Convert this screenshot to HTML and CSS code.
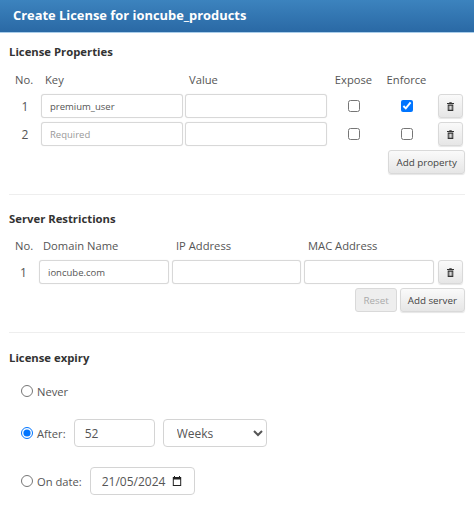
FILE: index.html
```html
<!DOCTYPE html>
<html lang="en">
<head>
    <meta charset="UTF-8">
    <meta name="viewport" content="width=device-width, initial-scale=1.0">
    <title>Create License</title>
    <link rel="stylesheet" href="styles.css">
</head>
<body>

    <svg class="icon-defs" width="0" height="0">
        <symbol id="trash" viewBox="0 0 8 10">
            <path d="M2.6 0h2.8v1H8v1.2H0V1h2.6z" fill="#333"/>
            <path d="M.8 2.8h6.4V10H.8z M2 4v4.8h1V4z M3.5 4v4.8h1V4z M5 4v4.8h1V4z" fill="#333" fill-rule="evenodd"/>
        </symbol>
    </svg>

    <div class="header">Create License for ioncube_products</div>

    <form class="content">
        <h4 class="first-title">License Properties</h4>
        <div class="prop-grid">
            <span class="col-label">No.</span>
            <span class="col-label pad">Key</span>
            <span class="col-label pad">Value</span>
            <span class="col-label center">Expose</span>
            <span class="col-label center">Enforce</span>
            <span></span>

            <span class="row-no">1</span>
            <input type="text" class="field" value="premium_user">
            <input type="text" class="field">
            <input type="checkbox" class="check">
            <input type="checkbox" class="check" checked>
            <button type="button" class="button icon-button"><svg class="trash"><use href="#trash"/></svg></button>

            <span class="row-no">2</span>
            <input type="text" class="field" placeholder="Required">
            <input type="text" class="field">
            <input type="checkbox" class="check">
            <input type="checkbox" class="check">
            <button type="button" class="button icon-button"><svg class="trash"><use href="#trash"/></svg></button>
        </div>
        <div class="actions">
            <button type="button" class="button">Add property</button>
        </div>

        <hr>

        <h4 class="server-title">Server Restrictions</h4>
        <div class="server-grid">
            <span class="col-label">No.</span>
            <span class="col-label pad">Domain Name</span>
            <span class="col-label pad">IP Address</span>
            <span class="col-label pad">MAC Address</span>
            <span></span>

            <span class="row-no">1</span>
            <input type="text" class="field" value="ioncube.com">
            <input type="text" class="field">
            <input type="text" class="field">
            <button type="button" class="button icon-button"><svg class="trash"><use href="#trash"/></svg></button>
        </div>
        <div class="actions">
            <button type="button" class="button" disabled>Reset</button>
            <button type="button" class="button">Add server</button>
        </div>

        <hr>

        <h4 class="expiry-title">License expiry</h4>
        <div class="expiry">
            <label class="expiry-row never">
                <input type="radio" name="expiry" class="radio">
                <span>Never</span>
            </label>
            <div class="expiry-row after">
                <input type="radio" name="expiry" id="after" class="radio" checked>
                <label for="after">After:</label>
                <input type="text" class="big-field number" value="52">
                <select class="big-field unit">
                    <option>Weeks</option>
                </select>
            </div>
            <div class="expiry-row on-date">
                <input type="radio" name="expiry" id="ondate" class="radio">
                <label for="ondate">On date:</label>
                <div class="big-field date">
                    <input type="text" class="date-text" value="21/05/2024">
                    <svg class="calendar" viewBox="0 0 10 10">
                        <path d="M2 0h1v1h4V0h1v1h1.2v9H.8V1H2z M1.8 3.4v5.6h6.4V3.4z" fill="#222" fill-rule="evenodd"/>
                    </svg>
                </div>
            </div>
        </div>
    </form>

</body>
</html>
```

FILE: styles.css
```css
* {
    margin: 0;
    padding: 0;
    box-sizing: border-box;
    font-family: 'Open Sans', sans-serif;
}

body {
    background: white;
    color: #555;
    font-size: 11.2px;
    overflow: hidden;
}

.icon-defs {
    display: block;
}

.header {
    height: 33px;
    padding-left: 13px;
    line-height: 31px;
    font-size: 12.9px;
    font-weight: bold;
    color: white;
    background: linear-gradient(#3c83be, #2a69a5);
    border-bottom: 1px solid #a9cdea;
}

.content {
    padding: 0 9px;
}

h4 {
    font-size: 11.3px;
    font-weight: bold;
    line-height: 16px;
    color: #333;
}

.first-title {
    margin-top: 11px;
}

.server-title {
    margin-top: 16px;
}

.expiry-title {
    margin-top: 17px;
}

hr {
    border: none;
    border-top: 1px solid #eee;
}

.prop-grid,
.server-grid {
    display: grid;
    align-items: center;
    row-gap: 4px;
}

.prop-grid {
    grid-template-columns: 30px 142px 142px 49px 53px 28px;
    column-gap: 2px;
    margin-top: 12px;
}

.server-grid {
    grid-template-columns: 27px 130px 129px 130px 26px;
    column-gap: 3px;
    margin-top: 11px;
}

.col-label {
    line-height: 16px;
    padding-left: 6px;
    margin-bottom: 2px;
}

.col-label.pad {
    padding-left: 4px;
}

.col-label.center {
    padding-left: 0;
    text-align: center;
}

.row-no {
    font-size: 12px;
    text-align: center;
    padding-left: 2px;
}

.field {
    width: 100%;
    height: 24px;
    padding: 0 8px;
    font-size: 9.5px;
    color: #555;
    background: white;
    border: 1px solid #d8d8d8;
    border-radius: 3px;
    box-shadow: 0 0 1px #ddd;
    outline: none;
}

.field::placeholder {
    color: #999;
}

.check {
    width: 12px;
    height: 12px;
    justify-self: center;
}

.button {
    height: 24px;
    padding: 0 7px;
    font-size: 9.8px;
    color: #444;
    background: linear-gradient(#fafafa, #e6e6e6);
    border: 1px solid #d9d9d9;
    border-radius: 3px;
    box-shadow: 0 1px 1px rgba(0, 0, 0, 0.1);
}

.button:disabled {
    color: #aaa;
    background: #eee;
    box-shadow: none;
}

.icon-button {
    width: 25px;
    padding: 0;
    display: flex;
    align-items: center;
    justify-content: center;
    justify-self: end;
}

.trash {
    width: 7px;
    height: 9px;
}

.actions {
    display: flex;
    justify-content: flex-end;
    gap: 3px;
    margin-top: 4px;
    margin-bottom: 20px;
}

.expiry {
    display: flex;
    flex-direction: column;
    padding-left: 12px;
    margin-top: 15px;
}

.expiry-row {
    display: flex;
    align-items: center;
}

.expiry-row.never {
    height: 20px;
}

.expiry-row.after {
    margin-top: 18px;
    height: 28px;
}

.expiry-row.on-date {
    margin-top: 20px;
    height: 28px;
}

.radio {
    width: 12px;
    height: 12px;
    margin-right: 4px;
}

.big-field {
    height: 28px;
    font-size: 12px;
    color: #555;
    background: white;
    border: 1px solid #d4d4d4;
    border-radius: 4px;
    outline: none;
}

.number {
    width: 81px;
    margin-left: 8px;
    padding: 0 10px;
}

.unit {
    width: 104px;
    margin-left: 8px;
    padding-left: 9px;
}

.date {
    width: 105px;
    margin-left: 8px;
    padding: 0 12px 0 11px;
    display: flex;
    align-items: center;
    justify-content: space-between;
}

.date-text {
    width: 66px;
    font-size: 12px;
    color: #555;
    border: none;
    outline: none;
}

.calendar {
    width: 10px;
    height: 10px;
}
```
